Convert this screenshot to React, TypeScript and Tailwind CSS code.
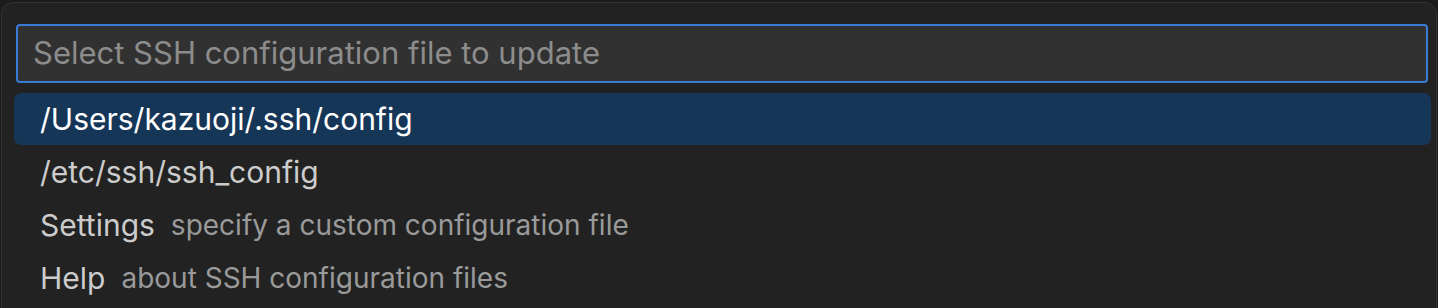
import React from 'react'

const items = [
  { label: '/Users/kazuoji/.ssh/config', selected: true },
  { label: '/etc/ssh/ssh_config' },
  { label: 'Settings', description: 'specify a custom configuration file' },
  { label: 'Help', description: 'about SSH configuration files' },
]

export default function App() {
  return (
    <div
      className="h-[308px] w-[1438px] overflow-hidden bg-[#1b1b1b] pt-[2px] pl-[1px]"
      style={{ fontFamily: 'Inter, "Noto Sans", sans-serif' }}
    >
      {/* quick input panel */}
      <div className="h-[320px] w-[1436px] rounded-t-[12px] border border-[#333333] bg-[#222222] pl-[12px] pr-[5px] pt-[21px]">
        <div className="ml-[2px] mr-[3px] flex h-[59px] items-center rounded-[4px] border-2 border-[#3a7bd5] bg-[#313131] pl-[15px]">
          <span className="text-[31px] text-[#8c8c8c]">Select SSH configuration file to update</span>
        </div>

        <div className="mt-[10px] flex flex-col gap-px">
          {items.map((it) => (
            <div
              key={it.label}
              className={
                it.selected
                  ? 'flex h-[52px] items-center rounded-[7px] bg-[#163658] pl-[26px]'
                  : 'flex h-[52px] items-center rounded-[7px] pl-[26px]'
              }
            >
              <span className={it.selected ? 'text-[30px] text-white' : 'text-[30px] text-[#cccccc]'}>
                {it.label}
              </span>
              {it.description && (
                <span className="ml-[16px] text-[28px] text-[#9a9a9a]">{it.description}</span>
              )}
            </div>
          ))}
        </div>
      </div>
    </div>
  )
}
